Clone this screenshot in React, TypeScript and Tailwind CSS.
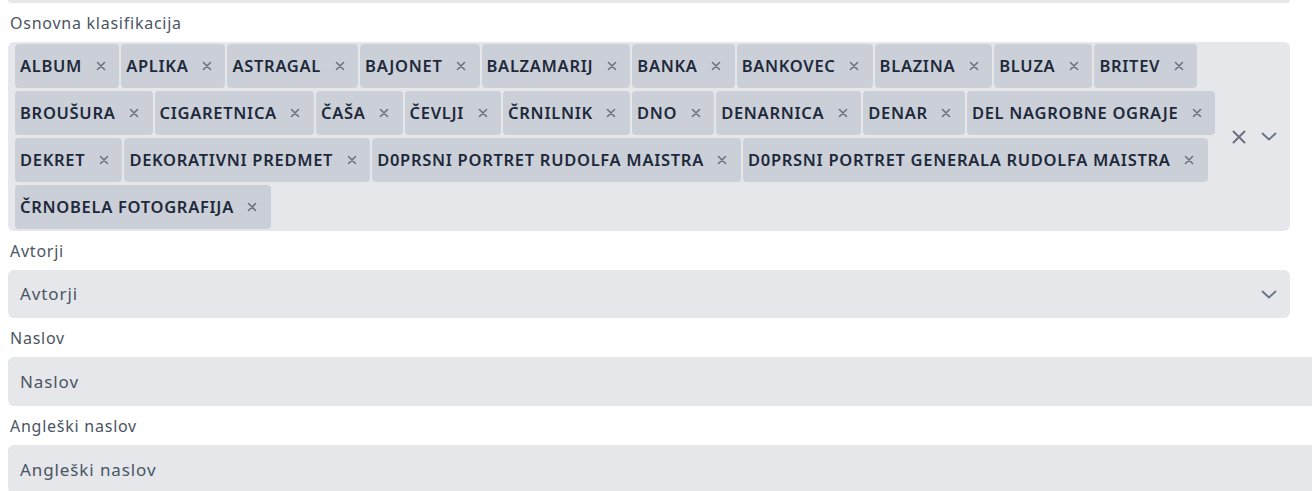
import React from "react";

const tags = [
  "ALBUM","APLIKA","ASTRAGAL","BAJONET","BALZAMARIJ","BANKA","BANKOVEC","BLAZINA","BLUZA","BRITEV",
  "BROUŠURA","CIGARETNICA","ČAŠA","ČEVLJI","ČRNILNIK","DNO","DENARNICA","DENAR","DEL NAGROBNE OGRAJE",
  "DEKRET","DEKORATIVNI PREDMET","D0PRSNI PORTRET RUDOLFA MAISTRA","D0PRSNI PORTRET GENERALA RUDOLFA MAISTRA",
  "ČRNOBELA FOTOGRAFIJA",
];

function SmallX() {
  return (
    <svg width="10" height="10" viewBox="0 0 10 10" fill="none" stroke="#6b7280" strokeWidth="1.6" strokeLinecap="round">
      <path d="M1.5 1.5 L8.5 8.5 M8.5 1.5 L1.5 8.5" />
    </svg>
  );
}

function ClearX() {
  return (
    <svg width="14" height="14" viewBox="0 0 14 14" fill="none" stroke="#6b7280" strokeWidth="2" strokeLinecap="round">
      <path d="M1.5 1.5 L12.5 12.5 M12.5 1.5 L1.5 12.5" />
    </svg>
  );
}

function Chevron() {
  return (
    <svg width="16" height="9" viewBox="0 0 16 9" fill="none" stroke="#6b7280" strokeWidth="1.8" strokeLinecap="round" strokeLinejoin="round">
      <path d="M1.5 1.5 L8 7.5 L14.5 1.5" />
    </svg>
  );
}

function Label({ children }: { children: React.ReactNode }) {
  return <div className="pt-2 pb-[7px] pl-[2px] text-[16px] leading-6 tracking-[0.75px] text-[#4b5563]">{children}</div>;
}

export default function App() {
  return (
    <div
      className="w-[1312px] h-[491px] overflow-hidden bg-white"
      style={{ fontFamily: "'Noto Sans', sans-serif" }}
    >
      <div className="pl-2 w-[1290px]">
        <div className="h-[3px] rounded-b-md bg-gray-200" />
        <Label>Osnovna klasifikacija</Label>
        <div className="flex items-center rounded-md bg-gray-200 pl-[7px] pr-[13px] py-[2px]">
          <div className="flex flex-1 flex-wrap gap-x-[2px] gap-y-[3px]">
            {tags.map((t) => (
              <div key={t} className="flex h-[44px] items-center rounded bg-[#cbd0d8]">
                <span className="pl-[5px] text-[16.5px] font-semibold tracking-[0.7px] text-[#1e293b] whitespace-nowrap">{t}</span>
                <span className="flex w-[37px] items-center justify-center"><SmallX /></span>
              </div>
            ))}
          </div>
          <div className="flex items-center gap-[15px] pl-3">
            <ClearX />
            <Chevron />
          </div>
        </div>
        <Label>Avtorji</Label>
        <div className="flex h-[48px] items-center justify-between rounded-md bg-gray-200 pl-3 pr-[13px]">
          <span className="text-[17px] tracking-[0.9px] text-[#4b5563]">Avtorji</span>
          <Chevron />
        </div>
      </div>
      <div className="pl-2 w-[1340px]">
        <Label>Naslov</Label>
        <div className="flex h-[49px] items-center rounded-md bg-gray-200 pl-3">
          <span className="text-[17px] tracking-[0.9px] text-[#4b5563]">Naslov</span>
        </div>
        <Label>Angleški naslov</Label>
        <div className="flex h-[49px] items-center rounded-md bg-gray-200 pl-3">
          <span className="text-[17px] tracking-[0.9px] text-[#4b5563]">Angleški naslov</span>
        </div>
      </div>
    </div>
  );
}
